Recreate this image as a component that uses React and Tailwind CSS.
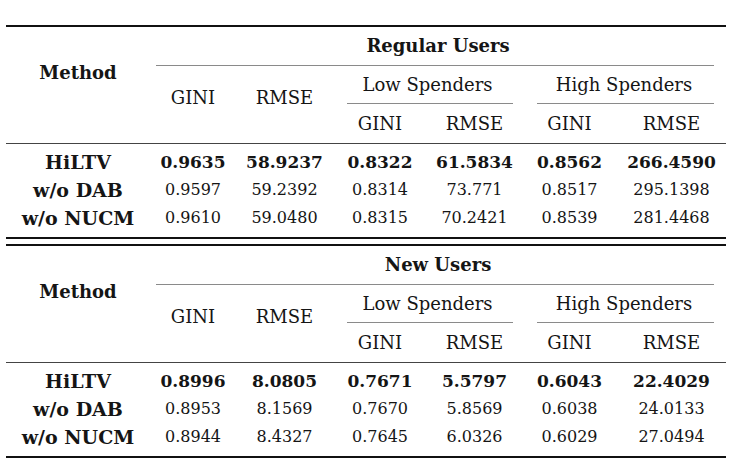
import React from 'react'

const cols = 'grid grid-cols-[144px_86px_97px_94px_95px_95px_109px]'

const tables = [
  {
    title: 'Regular Users',
    rows: [
      { name: 'HiLTV', bold: true, values: ['0.9635', '58.9237', '0.8322', '61.5834', '0.8562', '266.4590'] },
      { name: 'w/o DAB', values: ['0.9597', '59.2392', '0.8314', '73.771', '0.8517', '295.1398'] },
      { name: 'w/o NUCM', values: ['0.9610', '59.0480', '0.8315', '70.2421', '0.8539', '281.4468'] },
    ],
  },
  {
    title: 'New Users',
    rows: [
      { name: 'HiLTV', bold: true, values: ['0.8996', '8.0805', '0.7671', '5.5797', '0.6043', '22.4029'] },
      { name: 'w/o DAB', values: ['0.8953', '8.1569', '0.7670', '5.8569', '0.6038', '24.0133'] },
      { name: 'w/o NUCM', values: ['0.8944', '8.4327', '0.7645', '6.0326', '0.6029', '27.0494'] },
    ],
  },
]

function Block({ title, rows }) {
  return (
    <div>
      <div className="h-[2px] bg-[#111]" />

      {/* header */}
      <div className={`${cols} grid-rows-[38px_1px_37px_1px_39px] text-[18px]`}>
        <div className="col-start-1 row-start-1 row-span-5 flex items-center justify-center pb-[24px] font-bold">
          Method
        </div>
        <div className="col-start-2 col-span-6 row-start-1 flex items-center justify-center font-bold">
          {title}
        </div>
        <div className="col-start-2 col-span-6 row-start-2 ml-[6px] mr-[12px] bg-[#8a8a8a]" />

        <div className="col-start-2 row-start-3 row-span-3 flex items-center justify-center pb-[13px]">GINI</div>
        <div className="col-start-3 row-start-3 row-span-3 flex items-center justify-center pb-[13px]">RMSE</div>

        <div className="col-start-4 col-span-2 row-start-3 flex items-center justify-center">Low Spenders</div>
        <div className="col-start-6 col-span-2 row-start-3 flex items-center justify-center">High Spenders</div>
        <div className="col-start-4 col-span-2 row-start-4 ml-[14px] mr-[9px] bg-[#8a8a8a]" />
        <div className="col-start-6 col-span-2 row-start-4 ml-[15px] mr-[12px] bg-[#8a8a8a]" />

        <div className="col-start-4 row-start-5 flex items-center justify-center">GINI</div>
        <div className="col-start-5 row-start-5 flex items-center justify-center">RMSE</div>
        <div className="col-start-6 row-start-5 flex items-center justify-center">GINI</div>
        <div className="col-start-7 row-start-5 flex items-center justify-center">RMSE</div>
      </div>

      <div className="h-px bg-[#444]" />

      {/* body */}
      <div className="pt-[4px] pb-[5px]">
        {rows.map((r) => (
          <div key={r.name} className={`${cols} h-[28px] items-center ${r.bold ? 'text-[17px] font-bold' : 'text-[16px]'}`}>
            <div className="text-center font-bold text-[19px]">{r.name}</div>
            {r.values.map((v, i) => (
              <div key={i} className="text-center">
                {v}
              </div>
            ))}
          </div>
        ))}
      </div>

      <div className="h-[2px] bg-[#111]" />
    </div>
  )
}

export default function App() {
  return (
    <div className="w-[735px] h-[464px] bg-white pt-[25px]">
      <div className="mx-[6px] w-[720px] text-[#151515] leading-[28px] font-['DejaVu_Serif',serif] space-y-[5px]">
        {tables.map((t) => (
          <Block key={t.title} {...t} />
        ))}
      </div>
    </div>
  )
}
